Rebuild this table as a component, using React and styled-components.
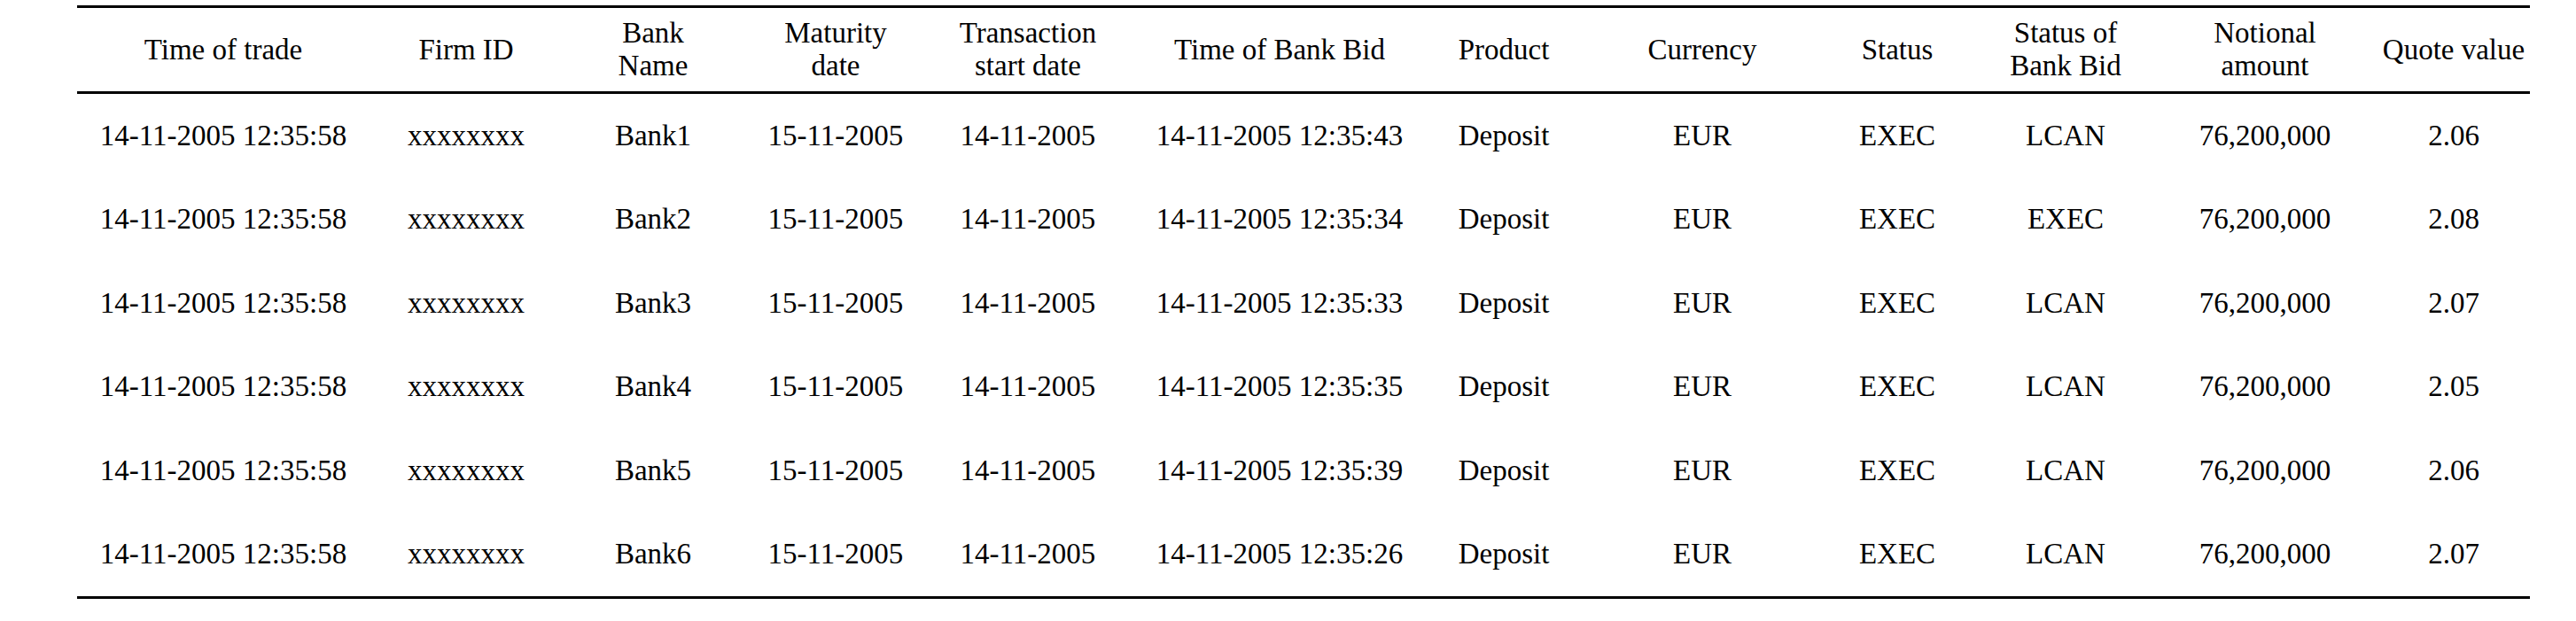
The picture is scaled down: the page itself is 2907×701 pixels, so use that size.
import React from "react";
import styled, { createGlobalStyle } from "styled-components";

const Global = createGlobalStyle`
  html, body { margin: 0; padding: 0; background: #ffffff; }
  body { font-family: "Liberation Serif", "Times New Roman", serif; color: #000; }
`;

const COLS = "330px 218px 204px 208px 226px 342px 164px 284px 156px 224px 226px 186px";

const Page = styled.div`
  padding: 6px 0 0 87px;
`;

const Table = styled.div`
  width: 2768px;
  border-top: 3px solid #000;
  border-bottom: 3px solid #000;
`;

const Grid = styled.div`
  display: grid;
  grid-template-columns: ${COLS};
  align-items: center;
  font-size: 33px;
  line-height: 37px;
  text-align: center;
`;

const HeaderRow = styled(Grid)`
  height: 94px;
  border-bottom: 3px solid #000;
`;

const Row = styled(Grid)`
  height: 94.5px;
`;

const Cell = styled.div`
  white-space: nowrap;
  &:last-child {
    padding-left: 14px;
  }
`;

const headers = [
  ["Time of trade"],
  ["Firm ID"],
  ["Bank", "Name"],
  ["Maturity", "date"],
  ["Transaction", "start date"],
  ["Time of Bank Bid"],
  ["Product"],
  ["Currency"],
  ["Status"],
  ["Status of", "Bank Bid"],
  ["Notional", "amount"],
  ["Quote value"],
];

const rows = [
  ["Bank1", "12:35:43", "LCAN", "2.06"],
  ["Bank2", "12:35:34", "EXEC", "2.08"],
  ["Bank3", "12:35:33", "LCAN", "2.07"],
  ["Bank4", "12:35:35", "LCAN", "2.05"],
  ["Bank5", "12:35:39", "LCAN", "2.06"],
  ["Bank6", "12:35:26", "LCAN", "2.07"],
];

export default function App() {
  return (
    <>
      <Global />
      <Page>
        <Table>
          <HeaderRow>
            {headers.map((lines, i) => (
              <Cell key={i}>
                {lines.map((l, j) => (
                  <div key={j}>{l}</div>
                ))}
              </Cell>
            ))}
          </HeaderRow>
          {rows.map(([bank, bid, bidStatus, quote]) => (
            <Row key={bank}>
              <Cell>14-11-2005 12:35:58</Cell>
              <Cell>xxxxxxxx</Cell>
              <Cell>{bank}</Cell>
              <Cell>15-11-2005</Cell>
              <Cell>14-11-2005</Cell>
              <Cell>14-11-2005 {bid}</Cell>
              <Cell>Deposit</Cell>
              <Cell>EUR</Cell>
              <Cell>EXEC</Cell>
              <Cell>{bidStatus}</Cell>
              <Cell>76,200,000</Cell>
              <Cell>{quote}</Cell>
            </Row>
          ))}
        </Table>
      </Page>
    </>
  );
}
